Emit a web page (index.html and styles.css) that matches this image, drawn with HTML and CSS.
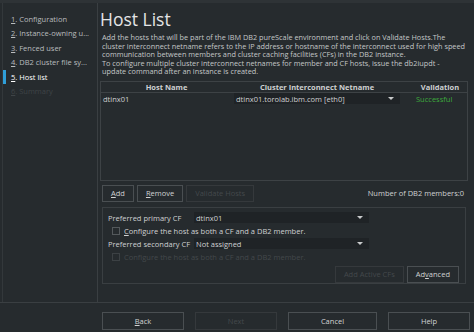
FILE: index.html
```html
<!DOCTYPE html>
<html lang="en">
<head>
    <meta charset="UTF-8">
    <title>Host List</title>
    <link rel="stylesheet" href="styles.css">
</head>
<body>
    <div class="window">
        <div class="content">
            <ul class="steps">
                <li><u>1</u>. Configuration</li>
                <li><u>2</u>. Instance-owning u...</li>
                <li><u>3</u>. Fenced user</li>
                <li><u>4</u>. DB2 cluster file sy...</li>
                <li class="active"><u>5</u>. Host list</li>
                <li class="disabled"><u>6</u>. Summary</li>
            </ul>

            <div class="main">
                <h1>Host List</h1>
                <p class="intro">Add the hosts that will be part of the IBM DB2 pureScale environment and click on Validate Hosts.The<br>cluster interconnect netname refers to the IP address or hostname of the interconnect used for high speed<br>communication between members and cluster caching facilities (CFs) in the DB2 instance.<br>To configure multiple cluster interconnect netnames for member and CF hosts, issue the db2iupdt -<br>update command after an instance is created.</p>

                <div class="table">
                    <div class="row head">
                        <span class="c-host">Host Name</span>
                        <span class="c-net">Cluster Interconnect Netname</span>
                        <span class="c-val">Validation</span>
                    </div>
                    <div class="row">
                        <span class="c-host">dtinx01</span>
                        <span class="c-net"><span class="combo">dtinx01.torolab.ibm.com [eth0]<i class="arrow"></i></span></span>
                        <span class="c-val ok">Successful</span>
                    </div>
                </div>

                <div class="actions">
                    <button class="btn"><u>A</u>dd</button>
                    <button class="btn"><u>R</u>emove</button>
                    <button class="btn" disabled>Validate Hosts</button>
                    <span class="count">Number of DB2 members:0</span>
                </div>

                <div class="group">
                    <div class="field">
                        <label>Preferred primary CF</label>
                        <span class="combo wide">dtinx01<i class="arrow"></i></span>
                    </div>
                    <div class="check"><span class="box"></span><u>C</u>onfigure the host as both a CF and a DB2 member.</div>
                    <div class="field">
                        <label>Preferred secondary CF</label>
                        <span class="combo wide">Not assigned<i class="arrow"></i></span>
                    </div>
                    <div class="check disabled"><span class="box"></span>Configure the host as both a CF and a DB2 member.</div>
                    <div class="group-buttons">
                        <button class="btn" disabled>Add Active CFs</button>
                        <button class="btn">Ad<u>v</u>anced</button>
                    </div>
                </div>
            </div>
        </div>

        <div class="footer">
            <button class="btn big"><u>B</u>ack</button>
            <button class="btn big" disabled>Next</button>
            <button class="btn big cancel">Cancel</button>
            <button class="btn big">Help</button>
        </div>
    </div>
</body>
</html>
```

FILE: styles.css
```css
body {
    margin: 0;
    background: #262b2e;
    color: #cfd1d2;
    font-family: "Open Sans", "DejaVu Sans", sans-serif;
    font-size: 7.5px;
    overflow: hidden;
}
u {
    text-decoration: underline;
}
.window {
    width: 474px;
    height: 332px;
    border-top: 3px solid #2e3336;
    box-sizing: border-box;
}
.content {
    display: flex;
    height: 299px;
    border-bottom: 1px solid #3a3f42;
}
.steps {
    list-style: none;
    margin: 0;
    padding: 9px 0 0 0;
    width: 94px;
    border-left: 1px solid #33383b;
    border-right: 1px solid #3a3f42;
    margin-left: 2px;
}
.steps li {
    height: 14.4px;
    line-height: 14.4px;
    padding-left: 5px;
    border-left: 3px solid transparent;
    color: #b9bcbe;
    white-space: nowrap;
    overflow: hidden;
}
.steps li.active {
    border-left-color: #2f9fd8;
    color: #ffffff;
}
.steps li.disabled {
    color: #3f4447;
}
.main {
    flex: 1;
    padding: 0 6px 0 2px;
}
h1 {
    margin: 3px 0 0 0;
    font-weight: normal;
    font-size: 17.5px;
    line-height: 26px;
    color: #e4e5e6;
}
.intro {
    margin: 1px 0 0 2px;
    font-size: 7.3px;
    line-height: 8.5px;
    white-space: nowrap;
    color: #c4c7c8;
}
.table {
    margin-top: 5px;
    height: 98px;
    border: 1px solid #3d4245;
}
.row {
    display: flex;
    height: 12px;
    align-items: center;
}
.row.head {
    height: 10px;
    font-weight: bold;
    border-bottom: 1px solid #3d4245;
    text-align: center;
}
.c-host {
    width: 131px;
    padding-left: 2px;
}
.head .c-host {
    padding-left: 0;
}
.c-net {
    width: 181px;
}
.head .c-net {
    width: 170px;
    padding-right: 11px;
}
.c-val {
    flex: 1;
}
.ok {
    color: #3da83d;
    padding-left: 1px;
}
.combo {
    display: flex;
    align-items: center;
    justify-content: space-between;
    background: #1f2326;
    height: 11px;
    width: 166px;
    padding: 0 6px 0 2px;
    box-sizing: border-box;
}
.arrow {
    width: 0;
    height: 0;
    border-left: 3px solid transparent;
    border-right: 3px solid transparent;
    border-top: 3px solid #c9cbcc;
}
.actions {
    display: flex;
    align-items: center;
    gap: 3px;
    margin-top: 4px;
    padding-left: 2px;
}
.btn {
    font: inherit;
    color: #d0d2d3;
    background: #262b2e;
    border: 1px solid #4a4f52;
    height: 17px;
    padding: 0 8px;
}
.btn:disabled {
    color: #44494c;
    border-color: #35393c;
}
.count {
    margin-left: auto;
    padding-right: 4px;
}
.group {
    margin: 5px 2px 0 2px;
    height: 77px;
    border: 1px solid #3a3f42;
    padding: 4px 6px 0 5px;
    box-sizing: border-box;
}
.field {
    display: flex;
    align-items: center;
    height: 12px;
}
.field label {
    width: 86px;
}
.combo.wide {
    width: 175px;
}
.check {
    display: flex;
    align-items: center;
    height: 14px;
    padding-left: 4px;
}
.check .box {
    width: 6px;
    height: 6px;
    border: 1px solid #54595c;
    margin-right: 4px;
}
.check.disabled {
    color: #43484b;
}
.check.disabled .box {
    border-color: #3c4144;
}
.group-buttons {
    display: flex;
    justify-content: flex-end;
    gap: 3px;
    margin-top: 2px;
}
.footer {
    display: flex;
    gap: 11px;
    padding: 9px 0 0 102px;
}
.btn.big {
    width: 82px;
    height: 18px;
}
.btn.big.cancel {
    width: 89px;
}
```
